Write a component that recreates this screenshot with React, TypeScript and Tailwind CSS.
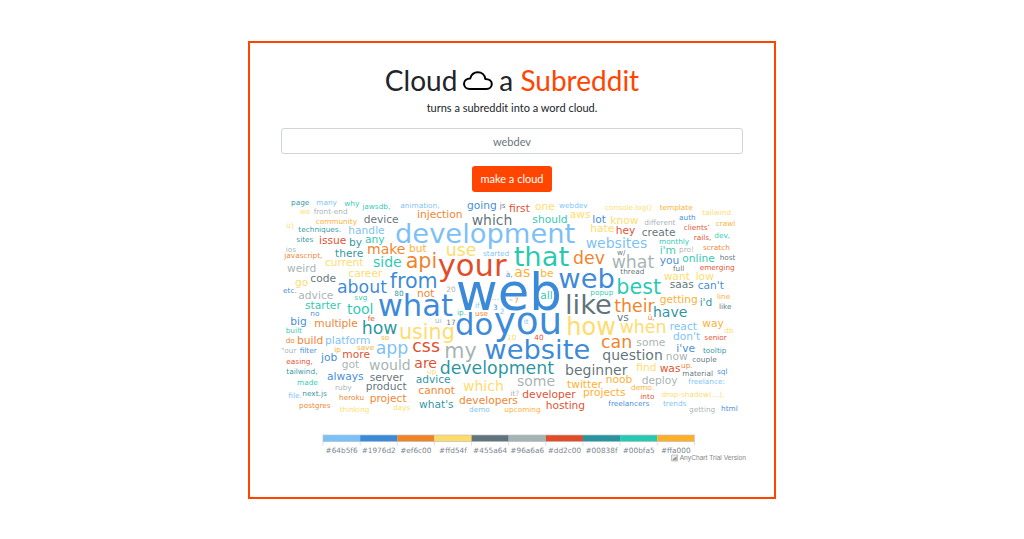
import { useState } from "react";

type Word = [text: string, x: number, y: number, size: number, color: number];

const COLORS = [
  "#64b5f6",
  "#1976d2",
  "#ef6c00",
  "#ffd54f",
  "#455a64",
  "#96a6a6",
  "#dd2c00",
  "#00838f",
  "#00bfa5",
  "#ffa000",
];

// text, x, baseline, font size, index into COLORS
const WORDS: Word[] = [
  ["web", 262, 171, 77, 1],
  ["you", 319, 207, 56, 1],
  ["your", 235, 121, 46, 6],
  ["what", 145, 181, 46, 1],
  ["do", 261, 209, 46, 1],
  ["development", 171, 71, 41, 0],
  ["that", 349, 105, 41, 8],
  ["website", 305, 245, 41, 1],
  ["web", 416, 138, 41, 1],
  ["like", 426, 178, 41, 4],
  ["how", 428, 209, 36, 3],
  ["api", 187, 109, 31, 2],
  ["from", 163, 139, 31, 1],
  ["using", 177, 215, 31, 3],
  ["my", 245, 243, 31, 5],
  ["best", 503, 147, 31, 8],
  ["use", 247, 90, 26, 3],
  ["dev", 438, 103, 26, 2],
  ["what", 496, 108, 26, 5],
  ["about", 84, 146, 26, 1],
  ["how", 121, 207, 26, 7],
  ["their", 500, 174, 26, 2],
  ["when", 508, 206, 26, 3],
  ["can", 480, 229, 26, 2],
  ["app", 142, 237, 26, 0],
  ["css", 197, 234, 26, 6],
  ["development", 238, 268, 26, 7],
  ["make", 129, 88, 21, 2],
  ["side", 138, 107, 21, 8],
  ["which", 286, 44, 21, 4],
  ["websites", 457, 78, 21, 0],
  ["tool", 99, 177, 21, 8],
  ["as", 350, 122, 21, 9],
  ["have", 558, 182, 21, 7],
  ["would", 132, 262, 21, 5],
  ["are", 200, 258, 21, 6],
  ["beginner", 426, 269, 21, 4],
  ["which", 273, 293, 21, 3],
  ["some", 354, 286, 21, 5],
  ["question", 482, 246, 21, 4],
  ["device", 124, 41, 16, 4],
  ["injection", 204, 33, 16, 2],
  ["handle", 101, 57, 16, 0],
  ["issue", 57, 73, 16, 6],
  ["by", 102, 75, 16, 7],
  ["any", 126, 71, 16, 8],
  ["there", 81, 92, 16, 7],
  ["but", 192, 85, 16, 9],
  ["current", 66, 105, 16, 3],
  ["weird", 9, 114, 16, 5],
  ["going", 279, 20, 16, 1],
  ["first", 342, 24, 16, 6],
  ["one", 381, 21, 16, 3],
  ["should", 377, 41, 16, 8],
  ["aws", 433, 33, 16, 3],
  ["lot", 467, 41, 16, 1],
  ["hate", 464, 55, 16, 3],
  ["know", 494, 42, 16, 3],
  ["hey", 502, 58, 16, 6],
  ["create", 541, 61, 16, 4],
  ["i'm", 568, 88, 16, 8],
  ["you", 568, 102, 16, 1],
  ["online", 602, 99, 16, 8],
  ["career", 101, 122, 16, 3],
  ["go", 21, 135, 16, 3],
  ["code", 44, 129, 16, 4],
  ["not", 204, 152, 16, 2],
  ["advice", 26, 155, 16, 5],
  ["starter", 36, 170, 16, 8],
  ["big", 14, 194, 16, 1],
  ["multiple", 50, 197, 16, 2],
  ["build", 24, 223, 16, 2],
  ["platform", 66, 222, 16, 0],
  ["be", 389, 122, 16, 9],
  ["all", 389, 155, 16, 8],
  ["want", 574, 126, 16, 3],
  ["low", 622, 126, 16, 3],
  ["saas", 583, 138, 16, 4],
  ["can't", 625, 140, 16, 1],
  ["getting", 568, 161, 16, 9],
  ["i'd", 628, 166, 16, 7],
  ["vs", 504, 188, 16, 4],
  ["react", 583, 201, 16, 0],
  ["way", 632, 197, 16, 9],
  ["don't", 588, 216, 16, 0],
  ["some", 533, 226, 16, 5],
  ["job", 60, 248, 16, 1],
  ["more", 92, 244, 16, 6],
  ["got", 91, 259, 16, 5],
  ["always", 69, 276, 16, 1],
  ["server", 133, 278, 16, 4],
  ["product", 127, 292, 16, 4],
  ["project", 133, 309, 16, 2],
  ["advice", 202, 281, 16, 7],
  ["cannot", 206, 298, 16, 2],
  ["what's", 207, 318, 16, 7],
  ["twitter", 429, 288, 16, 9],
  ["developer", 362, 304, 16, 6],
  ["developers", 267, 313, 16, 2],
  ["projects", 453, 301, 16, 9],
  ["hosting", 397, 320, 16, 6],
  ["now", 577, 247, 16, 5],
  ["i've", 593, 235, 16, 1],
  ["find", 533, 263, 16, 3],
  ["was", 568, 265, 16, 6],
  ["noob", 487, 281, 16, 9],
  ["deploy", 541, 282, 16, 5],
  ["page", 15, 14, 11, 7],
  ["many", 53, 14, 11, 0],
  ["why", 95, 16, 11, 8],
  ["jawsdb,", 122, 20, 11, 8],
  ["animation,", 179, 18, 11, 0],
  ["we", 28, 28, 11, 3],
  ["front-end", 49, 28, 11, 5],
  ["community", 52, 42, 11, 9],
  ["ü)", 8, 49, 11, 3],
  ["techniques.", 26, 54, 11, 7],
  ["sites", 23, 69, 11, 7],
  ["ios", 7, 84, 11, 5],
  ["javascript,", 5, 94, 11, 2],
  ["js", 328, 18, 11, 4],
  ["webdev", 417, 18, 11, 0],
  ["started", 303, 90, 11, 0],
  ["console.log()", 486, 21, 11, 3],
  ["template", 568, 21, 11, 9],
  ["different", 545, 44, 11, 5],
  ["auth", 597, 36, 11, 1],
  ["tailwind", 632, 29, 11, 3],
  ["clients’", 604, 52, 11, 6],
  ["crawl", 652, 46, 11, 9],
  ["rails,", 619, 67, 11, 6],
  ["dev,", 650, 63, 11, 8],
  ["monthly", 567, 73, 11, 8],
  ["pro!", 597, 84, 11, 5],
  ["scratch", 633, 82, 11, 2],
  ["w/", 504, 89, 11, 4],
  ["host", 658, 97, 11, 4],
  ["full", 588, 113, 11, 4],
  ["emerging", 628, 112, 11, 6],
  ["thread", 509, 118, 11, 4],
  ["etc.", 3, 146, 11, 1],
  ["80", 170, 150, 11, 7],
  ["svg", 110, 156, 11, 8],
  ["no", 44, 181, 11, 1],
  ["fe", 130, 188, 11, 6],
  ["built", 7, 206, 11, 8],
  ["do", 7, 221, 11, 2],
  ["so", 150, 216, 11, 9],
  ["à,", 337, 122, 11, 1],
  ["20", 248, 145, 11, 5],
  ["…", 316, 156, 11, 5],
  ["–", 342, 160, 11, 7],
  ["7", 350, 161, 11, 2],
  ["if", 291, 169, 11, 0],
  ["3", 318, 172, 11, 1],
  ["2", 328, 178, 11, 0],
  ["ip.", 264, 179, 11, 8],
  ["use", 291, 181, 11, 2],
  ["ui", 231, 191, 11, 5],
  ["17", 248, 194, 11, 4],
  ["it", 364, 193, 11, 0],
  ["10", 339, 216, 11, 3],
  ["40", 380, 217, 11, 6],
  ["popup", 464, 149, 11, 8],
  ["line", 654, 155, 11, 9],
  ["like", 657, 170, 11, 4],
  ["û,", 550, 187, 11, 2],
  ["db", 665, 206, 11, 3],
  ["senior", 635, 216, 11, 6],
  ["\"our", 0, 236, 11, 5],
  ["filter", 28, 236, 11, 1],
  ["ip", 80, 235, 11, 9],
  ["save", 114, 231, 11, 9],
  ["easing,", 8, 252, 11, 6],
  ["tailwind,", 8, 268, 11, 7],
  ["made", 24, 284, 11, 8],
  ["ruby", 81, 292, 11, 5],
  ["file.", 11, 303, 11, 0],
  ["next.js", 32, 300, 11, 7],
  ["heroku", 87, 307, 11, 2],
  ["postgres", 27, 318, 11, 2],
  ["thinking", 88, 325, 11, 3],
  ["days", 168, 321, 11, 3],
  ["up", 219, 268, 11, 3],
  ["it?", 344, 300, 11, 5],
  ["demo", 282, 325, 11, 0],
  ["upcoming", 335, 325, 11, 9],
  ["tooltip", 633, 236, 11, 7],
  ["couple", 617, 250, 11, 4],
  ["up.", 600, 258, 11, 2],
  ["material", 602, 270, 11, 4],
  ["sql", 654, 267, 11, 1],
  ["freelance:", 611, 282, 11, 0],
  ["demo.", 525, 292, 11, 9],
  ["into", 539, 305, 11, 6],
  ["drop-shadow(…),", 571, 302, 11, 3],
  ["freelancers", 491, 315, 11, 1],
  ["trends", 573, 316, 11, 0],
  ["getting", 612, 324, 11, 5],
  ["html", 660, 323, 11, 1],
];

const LEGEND_X = 63;
const LEGEND_WIDTH = 557;

function CloudIcon() {
  return (
    <svg viewBox="0 -2 30 22" className="h-[22px] w-[30px]" fill="none" stroke="#000" strokeWidth="2" strokeLinejoin="round" aria-hidden="true">
      <path d="M6.800 18C3.500 18 1 15.800 1 12.800C1 9.800 3.600 7.600 7.200 7.500C8.200 3.600 11.200 1.200 14.800 1.200C18.600 1.200 21.800 3.700 22.300 7.900C26 7.900 28.800 10 28.800 13C28.800 15.800 26.600 18 23.500 18Z" />
    </svg>
  );
}

function ColorLegend() {
  const step = LEGEND_WIDTH / COLORS.length;

  return (
    <g>
      {COLORS.map((color, i) => (
        <g key={color}>
          <rect x={LEGEND_X + i * step} y={359} width={step} height={10} fill={color} fillOpacity={0.85} />
          <line x1={LEGEND_X + i * step} x2={LEGEND_X + i * step} y1={369} y2={375} stroke="#cecece" />
          <text x={LEGEND_X + (i + 0.5) * step} y={386} fontSize={11} textAnchor="middle" fill="#7c868e">
            {color}
          </text>
        </g>
      ))}
      <line x1={LEGEND_X + LEGEND_WIDTH} x2={LEGEND_X + LEGEND_WIDTH} y1={369} y2={375} stroke="#cecece" />
      <rect x={LEGEND_X} y={359} width={LEGEND_WIDTH} height={10} fill="none" stroke="#b9c2c8" />
    </g>
  );
}

function WordCloud() {
  return (
    <svg
      viewBox="0 -1 693 405"
      className="block w-full overflow-visible font-['DejaVu_Sans',Verdana,sans-serif]"
      role="img"
      aria-label="Word cloud"
    >
      {WORDS.map(([text, x, y, size, color]) => (
        <text key={`${text}-${x}-${y}`} x={x} y={y} fontSize={size} fill={COLORS[color]} fillOpacity={0.85}>
          {text}
        </text>
      ))}
      <ColorLegend />
      <g>
        <rect x={586} y={389} width={9} height={9} fill="#eee" stroke="#aaa" />
        <path d="M587.500 397v-2l6-4v6z" fill="#999" />
        <text x={598} y={397} fontSize={10} fill="#888" className="font-['Liberation_Sans',Arial,sans-serif]">
          AnyChart Trial Version
        </text>
      </g>
    </svg>
  );
}

export default function App() {
  const [subreddit, setSubreddit] = useState("");

  return (
    <main className="min-h-screen bg-white px-4 py-[41px] font-['Lato',sans-serif] text-[11px] text-[#212529]">
      <div className="mx-auto w-full max-w-[528px] border-2 border-[#ff4500] px-[31px] pt-[21px] pb-8 text-center">
        <h1 className="flex items-center justify-center gap-1.5 text-[28px] leading-8">
          <span>Cloud</span>
          <CloudIcon />
          <span>
            a <span className="text-[#ff4500]">Subreddit</span>
          </span>
        </h1>
        <p className="mt-1 leading-4">turns a subreddit into a word cloud.</p>
        <form onSubmit={(e) => e.preventDefault()}>
          <input
            type="text"
            aria-label="Subreddit"
            placeholder="webdev"
            value={subreddit}
            onChange={(e) => setSubreddit(e.target.value)}
            className="mt-3 block h-[26px] w-full rounded-[3px] border border-[#ced4da] px-2 text-center placeholder:text-[#6c757d]"
          />
          <button type="submit" className="mt-3 h-[26px] rounded-[3px] bg-[#ff4500] px-2 text-white">
            make a cloud
          </button>
        </form>
        <div className="mt-[3px]">
          <WordCloud />
        </div>
      </div>
    </main>
  );
}
